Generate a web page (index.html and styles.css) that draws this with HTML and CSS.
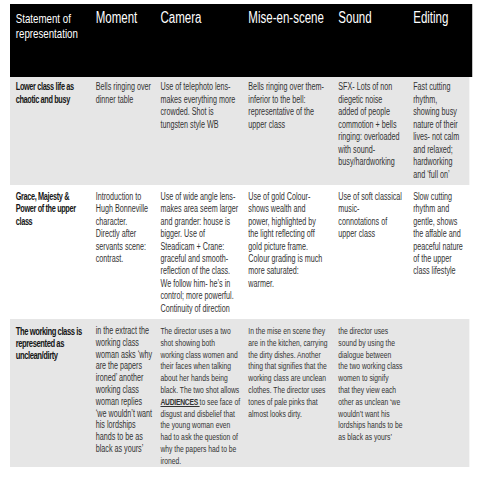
FILE: index.html
```html
<!DOCTYPE html>
<html>
<head>
<meta charset="utf-8">
<link rel="stylesheet" href="styles.css">
</head>
<body>
<div class="frame">
<div class="sheet">
  <div class="row head">
    <div class="cell h1">Statement of<br>representation</div>
    <div class="cell hx">Moment</div>
    <div class="cell hx">Camera</div>
    <div class="cell hx">Mise-en-scene</div>
    <div class="cell hx">Sound</div>
    <div class="cell hx">Editing</div>
  </div>
  <div class="row gray r1">
    <div class="cell lead">Lower class life as<br>chaotic and busy</div>
    <div class="cell">Bells ringing over<br>dinner table</div>
    <div class="cell">Use of telephoto lens-<br>makes everything more<br>crowded. Shot is<br>tungsten style WB</div>
    <div class="cell">Bells ringing over them-<br>inferior to the bell:<br>representative of the<br>upper class</div>
    <div class="cell">SFX- Lots of non<br>diegetic noise<br>added of people<br>commotion + bells<br>ringing: overloaded<br>with sound-<br>busy/hardworking</div>
    <div class="cell">Fast cutting<br>rhythm,<br>showing busy<br>nature of their<br>lives- not calm<br>and relaxed;<br>hardworking<br>and ‘full on’</div>
  </div>
  <div class="row r2">
    <div class="cell lead">Grace, Majesty &amp;<br>Power of the upper<br>class</div>
    <div class="cell">Introduction to<br>Hugh Bonneville<br>character.<br>Directly after<br>servants scene:<br>contrast.</div>
    <div class="cell">Use of wide angle lens-<br>makes area seem larger<br>and grander: house is<br>bigger. Use of<br>Steadicam + Crane:<br>graceful and smooth-<br>reflection of the class.<br>We follow him- he’s in<br>control; more powerful.<br>Continuity of direction</div>
    <div class="cell">Use of gold Colour-<br>shows wealth and<br>power, highlighted by<br>the light reflecting off<br>gold picture frame.<br>Colour grading is much<br>more saturated:<br>warmer.</div>
    <div class="cell">Use of soft classical<br>music-<br>connotations of<br>upper class</div>
    <div class="cell">Slow cutting<br>rhythm and<br>gentle, shows<br>the affable and<br>peaceful nature<br>of the upper<br>class lifestyle</div>
  </div>
  <div class="row gray r3">
    <div class="cell lead big">The working class is<br>represented as<br>unclean/dirty</div>
    <div class="cell">in the extract the<br>working class<br>woman asks ‘why<br>are the papers<br>ironed’ another<br>working class<br>woman replies<br>‘we wouldn’t want<br>his lordships<br>hands to be as<br>black as yours’</div>
    <div class="cell small">The director uses a two<br>shot showing both<br>working class women and<br>their faces when talking<br>about her hands being<br>black. The two shot allows<br><b class="u">AUDIENCES </b>to see face of<br>disgust and disbelief that<br>the young woman even<br>had to ask the question of<br>why the papers had to be<br>ironed.</div>
    <div class="cell small">In the mise en scene they<br>are in the kitchen, carrying<br>the dirty dishes. Another<br>thing that signifies that the<br>working class are unclean<br>clothes. The director uses<br>tones of pale pinks that<br>almost looks dirty.</div>
    <div class="cell small">the director uses<br>sound by using the<br>dialogue between<br>the two working class<br>women to signify<br>that they view each<br>other as unclean ‘we<br>wouldn’t want his<br>lordships hands to be<br>as black as yours’</div>
    <div class="cell"></div>
  </div>
</div>
</div>
</body>
</html>
```
FILE: styles.css
```css
html, body {
  margin: 0;
  padding: 0;
  background: #ffffff;
}
body {
  padding: 4px 0 0 10px;
  font-family: "Liberation Sans", Arial, sans-serif;
  color: #333333;
}
.frame {
  width: 464px;
  overflow: hidden;
}
/* the source image is horizontally compressed; mimic it */
.sheet {
  width: 642px;
  transform: scaleX(0.72);
  transform-origin: 0 0;
}
.row {
  display: grid;
  grid-template-columns: 111px 90px 122px 125px 104px 90px;
}
.head {
  background: #000;
  color: #fff;
  height: 73px;
}
.gray {
  background: #e6e6e6;
  margin-right: 4px;
}
.r1 { height: 108px; }
.r2 { height: 134px; }
.r3 { height: 148px; }
.cell {
  padding: 4px 0 0 8px;
  font-size: 10px;
  line-height: 12.5px;
  white-space: nowrap;
}
.r2 .cell { padding-top: 6px; line-height: 12.4px; }
.r3 .cell { padding-top: 6px; line-height: 11.8px; }
.lead {
  font-weight: bold;
  color: #151515;
  font-size: 10.2px;
  letter-spacing: -0.5px;
}
.r3 .big {
  font-size: 10.6px;
  line-height: 12.2px;
  letter-spacing: -0.6px;
}
.small {
  font-size: 9.4px;
}
.h1 {
  font-size: 13.5px;
  line-height: 14.5px;
  padding-top: 8px;
}
.hx {
  font-size: 16px;
  line-height: 20px;
  padding-top: 4px;
}
.u {
  text-decoration: underline;
  letter-spacing: -0.35px;
}
```
